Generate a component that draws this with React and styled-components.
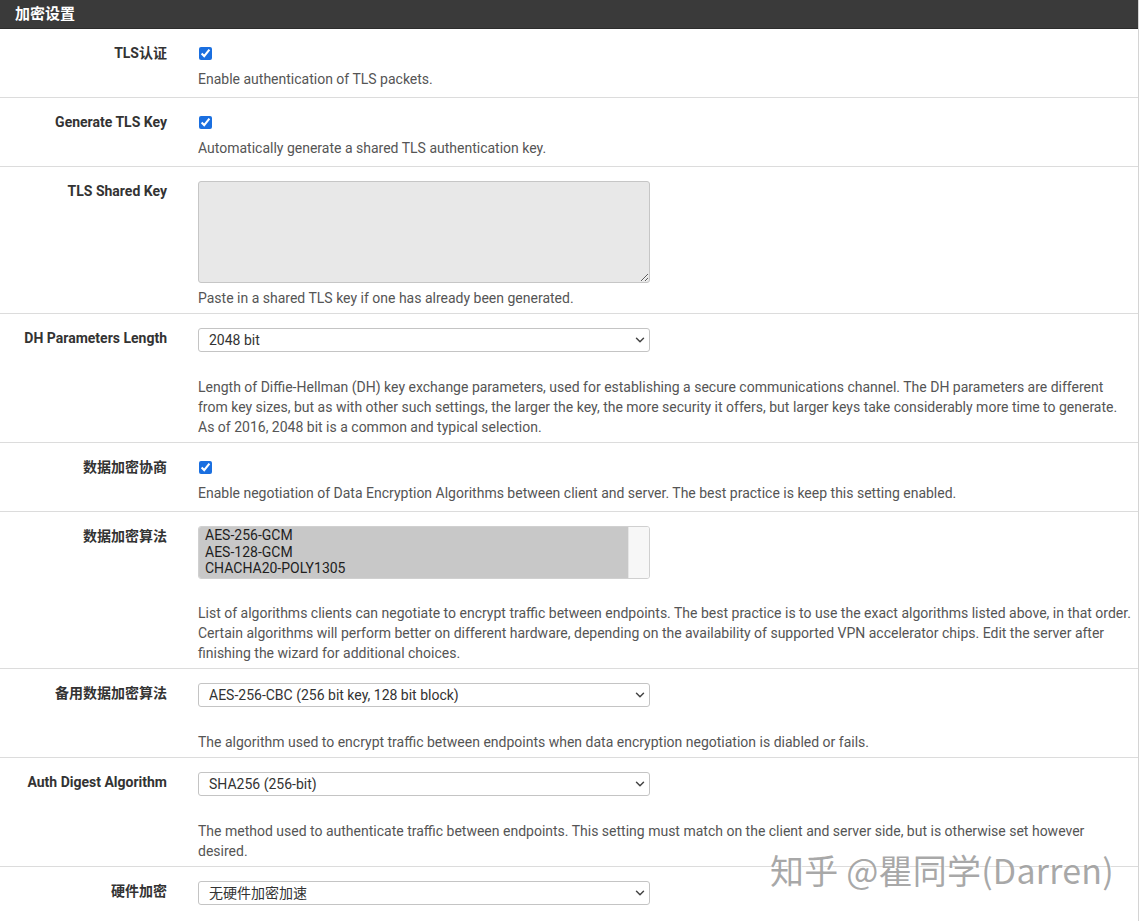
import React from 'react';
import styled, { createGlobalStyle } from 'styled-components';
import { ChevronDown } from 'lucide-react';

const GlobalStyle = createGlobalStyle`
  html, body {
    margin: 0;
    padding: 0;
    background: #fff;
  }
  body {
    font-family: Roboto, "Noto Sans CJK SC", sans-serif;
    font-size: 14px;
    color: #333;
  }
`;

const rows = [
  { label: 'TLS认证', type: 'check', help: 'Enable authentication of TLS packets.' },
  { label: 'Generate TLS Key', type: 'check', help: 'Automatically generate a shared TLS authentication key.' },
  { label: 'TLS Shared Key', type: 'textarea', help: 'Paste in a shared TLS key if one has already been generated.' },
  {
    label: 'DH Parameters Length',
    type: 'select',
    value: '2048 bit',
    help: 'Length of Diffie-Hellman (DH) key exchange parameters, used for establishing a secure communications channel. The DH parameters are different from key sizes, but as with other such settings, the larger the key, the more security it offers, but larger keys take considerably more time to generate. As of 2016, 2048 bit is a common and typical selection.',
  },
  { label: '数据加密协商', type: 'check', help: 'Enable negotiation of Data Encryption Algorithms between client and server. The best practice is keep this setting enabled.' },
  {
    label: '数据加密算法',
    type: 'multi',
    options: ['AES-256-GCM', 'AES-128-GCM', 'CHACHA20-POLY1305'],
    help: 'List of algorithms clients can negotiate to encrypt traffic between endpoints. The best practice is to use the exact algorithms listed above, in that order. Certain algorithms will perform better on different hardware, depending on the availability of supported VPN accelerator chips. Edit the server after finishing the wizard for additional choices.',
  },
  {
    label: '备用数据加密算法',
    type: 'select',
    value: 'AES-256-CBC (256 bit key, 128 bit block)',
    help: 'The algorithm used to encrypt traffic between endpoints when data encryption negotiation is diabled or fails.',
  },
  {
    label: 'Auth Digest Algorithm',
    type: 'select',
    value: 'SHA256 (256-bit)',
    help: 'The method used to authenticate traffic between endpoints. This setting must match on the client and server side, but is otherwise set however desired.',
  },
  { label: '硬件加密', type: 'select', value: '无硬件加密加速' },
];

// gap between the control and its help text
const helpGap = { check: 6, textarea: 5, select: 25, multi: 24 };

const App = () => {
  return (
    <Page>
      <GlobalStyle />
      <Panel>
        <Heading>加密设置</Heading>
        {rows.map((row, i) => (
          <Row key={i} $check={row.type === 'check'}>
            <Label>{row.label}</Label>
            <Field>
              {row.type === 'check' && (
                <CheckLine>
                  <CheckBox type="checkbox" defaultChecked />
                </CheckLine>
              )}
              {row.type === 'textarea' && <KeyArea disabled />}
              {row.type === 'select' && (
                <SelectWrap>
                  <Select defaultValue={row.value}>
                    <option>{row.value}</option>
                  </Select>
                  <Chevron size={14} strokeWidth={2.5} />
                </SelectWrap>
              )}
              {row.type === 'multi' && (
                <MultiBox>
                  <OptionList>
                    {row.options.map((o) => (
                      <Option key={o}>{o}</Option>
                    ))}
                  </OptionList>
                  <ScrollTrack />
                </MultiBox>
              )}
              {row.help && <Help $gap={helpGap[row.type]}>{row.help}</Help>}
            </Field>
          </Row>
        ))}
      </Panel>
      <Watermark>知乎 @瞿同学(Darren)</Watermark>
    </Page>
  );
};

const Page = styled.div`
  position: relative;
  width: 1140px;
  height: 921px;
  overflow: hidden;
`;

const Panel = styled.div`
  width: 1138px;
  min-height: 921px;
  border-right: 1px solid #d4d4d4;
`;

const Heading = styled.div`
  height: 28px;
  line-height: 28px;
  background: #3a3a3a;
  border-bottom: 1px solid #2c2c2c;
  color: #fff;
  font-weight: 700;
  font-size: 15px;
  padding-left: 15px;
`;

const Row = styled.div`
  display: grid;
  grid-template-columns: 167px 1fr;
  column-gap: 31px;
  padding: 14px 2px ${(p) => (p.$check ? '8px' : '5px')} 0;
  border-bottom: 1px solid #dcdcdc;

  &:last-child {
    border-bottom: none;
  }
`;

const Label = styled.div`
  text-align: right;
  font-weight: 700;
  font-size: 14px;
  line-height: 20px;
  color: #333;
`;

const Field = styled.div`
  display: flex;
  flex-direction: column;
  min-width: 0;
`;

const CheckLine = styled.div`
  height: 20px;
  display: flex;
  align-items: center;
`;

const CheckBox = styled.input`
  width: 13px;
  height: 13px;
  margin: 0 0 0 1px;
  accent-color: #1a6fe0;
`;

const KeyArea = styled.textarea`
  display: block;
  box-sizing: border-box;
  width: 452px;
  height: 102px;
  background: #e8e8e8;
  border: 1px solid #c6c6c6;
  border-radius: 3px;
  resize: vertical;
  margin: 0;
`;

const SelectWrap = styled.div`
  position: relative;
  width: 452px;
  height: 24px;
`;

const Select = styled.select`
  box-sizing: border-box;
  width: 100%;
  height: 24px;
  appearance: none;
  background: #fff;
  border: 1px solid #c4c4c4;
  border-radius: 3px;
  padding: 0 24px 0 10px;
  margin: 0;
  font-family: Roboto, "Noto Sans CJK SC", sans-serif;
  font-size: 14px;
  color: #333;
  display: block;
`;

const Chevron = styled(ChevronDown)`
  position: absolute;
  right: 3px;
  top: 5px;
  color: #444;
  pointer-events: none;
`;

const MultiBox = styled.div`
  box-sizing: border-box;
  width: 452px;
  height: 53px;
  display: flex;
  border: 1px solid #d0d0d0;
  border-radius: 3px;
  overflow: hidden;
`;

const OptionList = styled.div`
  flex: 1;
  background: #c8c8c8;
  padding: 0 0 0 6px;
`;

const Option = styled.div`
  font-size: 14px;
  line-height: 16.7px;
  color: #1e1e1e;
`;

const ScrollTrack = styled.div`
  width: 20px;
  background: #f7f7f7;
  border-left: 1px solid #e6e6e6;
`;

const Help = styled.div`
  margin-top: ${(p) => p.$gap}px;
  font-size: 14px;
  line-height: 20px;
  color: #555;
`;

const Watermark = styled.div`
  position: absolute;
  left: 770px;
  top: 848px;
  font-family: "Noto Sans CJK SC", sans-serif;
  font-size: 34px;
  letter-spacing: 0.2px;
  line-height: 44px;
  color: rgba(140, 140, 140, 0.75);
  text-shadow: 1px 1px 0 rgba(255, 255, 255, 0.8);
  white-space: nowrap;
  pointer-events: none;
`;

export default App;
